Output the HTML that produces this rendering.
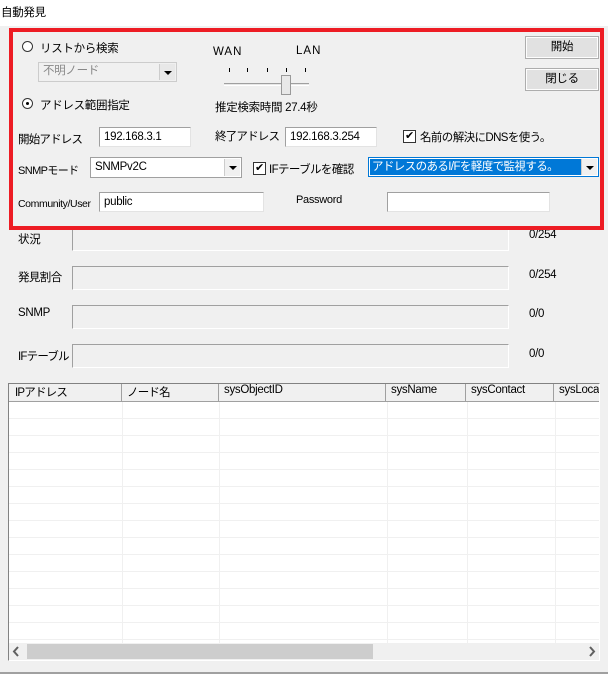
<!DOCTYPE html>
<html><head><meta charset="utf-8"><style>
*{box-sizing:border-box;margin:0;padding:0}
body{width:608px;height:674px;background:#f0f0f0;position:relative;overflow:hidden;font-family:"Liberation Sans","Noto Sans CJK JP",sans-serif;font-size:11.5px;letter-spacing:-0.3px;color:#000}
.a{position:absolute;white-space:nowrap}
.inp{position:absolute;background:#fff;border:1px solid #a0a0a0;border-bottom-color:#e3e3e3;border-right-color:#e3e3e3;padding:2px 4px;font-size:11.5px;line-height:14px}
.btn{position:absolute;background:#e1e1e1;border:1px solid #adadad;box-shadow:inset 0 0 0 1px #fdfdfd;text-align:center;line-height:20px}
.dd{position:absolute;right:1px;top:1px;bottom:1px;width:16px;background:#f0f0f0;border-left:1px solid #ccc}
.dd:after{content:"";position:absolute;left:4px;top:7px;border-left:4px solid transparent;border-right:4px solid transparent;border-top:4px solid #000}
.bar{position:absolute;left:72px;width:437px;height:24px;border:1px solid #a0a0a0;border-right-color:#fff;border-bottom-color:#fff;background:#f0f0f0}
.radio{position:absolute;width:11px;height:11px;border-radius:50%;border:1px solid #333;background:#fff}
.cb{position:absolute;width:13px;height:13px;border:1px solid #333;background:#fff;font-size:11px;line-height:11px;text-align:center}
</style></head><body>
<div class="a" style="left:0;top:0;width:608px;height:26px;background:#fff"></div>
<div class="a" style="left:1px;top:4px">自動発見</div>

<div class="radio" style="left:22px;top:41px"></div>
<div class="a" style="left:40px;top:40px">リストから検索</div>
<div class="inp" style="left:38px;top:62px;width:139px;height:20px;background:#f0f0f0;color:#888;border-color:#ccc;padding-top:1px">不明ノード<div class="dd" style="background:#e8e8e8"></div></div>
<div class="a" style="left:213px;top:46px;letter-spacing:1px">WAN</div>
<div class="a" style="left:296px;top:45px;letter-spacing:1px">LAN</div>
<div class="a" style="left:229px;top:68px;width:1px;height:4px;background:#000"></div>
<div class="a" style="left:247px;top:68px;width:1px;height:4px;background:#000"></div>
<div class="a" style="left:267px;top:68px;width:1px;height:4px;background:#000"></div>
<div class="a" style="left:286px;top:68px;width:1px;height:4px;background:#000"></div>
<div class="a" style="left:305px;top:68px;width:1px;height:4px;background:#000"></div>
<div class="a" style="left:224px;top:83px;width:85px;height:3px;border-top:1px solid #a0a0a0;border-bottom:1px solid #fff;background:#e7e7e7"></div>
<div class="a" style="left:281px;top:75px;width:10px;height:20px;background:#e8e8e8;border:1px solid #999"></div>

<div class="radio" style="left:22px;top:98px"></div>
<div class="a" style="left:26px;top:102px;width:3px;height:3px;background:#000;border-radius:50%"></div>
<div class="a" style="left:40px;top:97px">アドレス範囲指定</div>
<div class="a" style="left:215px;top:99px">推定検索時間 27.4秒</div>

<div class="btn" style="left:525px;top:36px;width:74px;height:23px">開始</div>
<div class="btn" style="left:525px;top:68px;width:74px;height:23px">閉じる</div>

<div class="a" style="left:18px;top:131px;letter-spacing:-0.8px">開始アドレス</div>
<div class="inp" style="left:99px;top:127px;width:92px;height:20px">192.168.3.1</div>
<div class="a" style="left:215px;top:128px;letter-spacing:-0.8px">終了アドレス</div>
<div class="inp" style="left:285px;top:127px;width:92px;height:20px">192.168.3.254</div>
<div class="cb" style="left:403px;top:130px">✔</div>
<div class="a" style="left:420px;top:129px;letter-spacing:-0.6px">名前の解決にDNSを使う。</div>

<div class="a" style="left:18px;top:162px;font-size:11px;letter-spacing:-0.6px">SNMPモード</div>
<div class="inp" style="left:90px;top:157px;width:152px;height:21px;border:1px solid #a0a0a0">SNMPv2C<div class="dd"></div></div>
<div class="cb" style="left:253px;top:162px">✔</div>
<div class="a" style="left:269px;top:161px;letter-spacing:-0.6px">IFテーブルを確認</div>
<div class="inp" style="left:368px;top:157px;width:231px;height:20px;border:1px solid #0078d7;padding:0"><div style="position:absolute;left:1px;top:1px;width:212px;height:16px;background:#0078d7;color:#fff;padding-left:2px;line-height:16px;letter-spacing:-0.6px">アドレスのあるI/Fを軽度で監視する。</div><div class="dd"></div></div>

<div class="a" style="left:18px;top:198px;font-size:10.5px;letter-spacing:-0.4px">Community/User</div>
<div class="inp" style="left:99px;top:192px;width:165px;height:20px">public</div>
<div class="a" style="left:296px;top:194px;font-size:11px">Password</div>
<div class="inp" style="left:387px;top:192px;width:163px;height:20px"></div>

<div class="bar" style="top:227px"></div>
<div class="a" style="left:18px;top:231px">状況</div>
<div class="a" style="left:529px;top:229px">0/254</div>
<div class="bar" style="top:266px"></div>
<div class="a" style="left:18px;top:269px;letter-spacing:-0.6px">発見割合</div>
<div class="a" style="left:529px;top:269px">0/254</div>
<div class="bar" style="top:305px"></div>
<div class="a" style="left:18px;top:307px">SNMP</div>
<div class="a" style="left:529px;top:308px">0/0</div>
<div class="bar" style="top:344px"></div>
<div class="a" style="left:18px;top:348px;letter-spacing:-0.8px">IFテーブル</div>
<div class="a" style="left:529px;top:348px">0/0</div>

<div class="a" style="left:9px;top:28px;width:595px;height:202px;border:4px solid #ed1c24"></div>

<div class="a" style="left:8px;top:383px;width:592px;height:278px;border:1px solid #828282;border-right-color:#fff;border-bottom-color:#fff;background:#fff;overflow:hidden">
<svg width="592" height="278" style="position:absolute;left:0;top:0">
<g stroke="#f0f0f0">
<line x1="0" y1="34.5" x2="592" y2="34.5"/><line x1="0" y1="51.5" x2="592" y2="51.5"/><line x1="0" y1="68.5" x2="592" y2="68.5"/><line x1="0" y1="85.5" x2="592" y2="85.5"/><line x1="0" y1="102.5" x2="592" y2="102.5"/><line x1="0" y1="119.5" x2="592" y2="119.5"/><line x1="0" y1="136.5" x2="592" y2="136.5"/><line x1="0" y1="153.5" x2="592" y2="153.5"/><line x1="0" y1="170.5" x2="592" y2="170.5"/><line x1="0" y1="187.5" x2="592" y2="187.5"/><line x1="0" y1="204.5" x2="592" y2="204.5"/><line x1="0" y1="221.5" x2="592" y2="221.5"/><line x1="0" y1="238.5" x2="592" y2="238.5"/><line x1="0" y1="255.5" x2="592" y2="255.5"/>
<line x1="113.5" y1="0" x2="113.5" y2="260"/><line x1="210.5" y1="0" x2="210.5" y2="260"/><line x1="378.5" y1="0" x2="378.5" y2="260"/><line x1="458.5" y1="0" x2="458.5" y2="260"/><line x1="546.5" y1="0" x2="546.5" y2="260"/>
</g>
<rect x="0" y="0" width="592" height="17" fill="#f0f0f0"/>
<g stroke="#a0a0a0"><line x1="0" y1="17.5" x2="592" y2="17.5"/><line x1="112.5" y1="0" x2="112.5" y2="17"/><line x1="209.5" y1="0" x2="209.5" y2="17"/><line x1="376.5" y1="0" x2="376.5" y2="17"/><line x1="456.5" y1="0" x2="456.5" y2="17"/><line x1="544.5" y1="0" x2="544.5" y2="17"/></g>
<rect x="0" y="259" width="592" height="17" fill="#f0f0f0"/>
<rect x="18" y="260" width="346" height="15" fill="#cdcdcd"/>
<path d="M9 263 L5 267.5 L9 272" stroke="#606060" stroke-width="2" fill="none"/>
<path d="M581 263 L585 267.5 L581 272" stroke="#606060" stroke-width="2" fill="none"/>
</svg>
<div class="a" style="left:6px;top:0px;letter-spacing:-0.8px">IPアドレス</div>
<div class="a" style="left:118px;top:0px;letter-spacing:-0.8px">ノード名</div>
<div class="a" style="left:215px;top:0px">sysObjectID</div>
<div class="a" style="left:382px;top:0px">sysName</div>
<div class="a" style="left:462px;top:0px">sysContact</div>
<div class="a" style="left:550px;top:0px">sysLocation</div>
</div>
<div class="a" style="left:0;top:672px;width:608px;height:2px;background:#a0a0a0"></div>
</body></html>
